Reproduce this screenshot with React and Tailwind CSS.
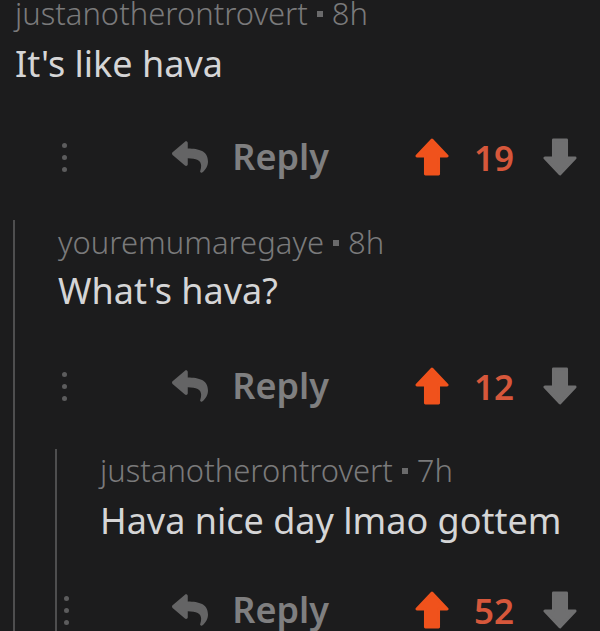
import { FaReply } from 'react-icons/fa'

function VoteArrow({ down = false, className = '' }) {
  return (
    <svg
      viewBox="0 0 36 40"
      className={`h-[38px] w-[34px] ${down ? 'rotate-180' : ''} ${className}`}
    >
      <polygon
        points="18,2 34,19 25,19 25,38 11,38 11,19 2,19"
        fill="currentColor"
        stroke="currentColor"
        strokeWidth="3"
        strokeLinejoin="round"
      />
    </svg>
  )
}

function Dots() {
  return (
    <div className="flex flex-col gap-[7px]">
      <span className="block h-[5px] w-[5px] rounded-full bg-[#5c5c5d]" />
      <span className="block h-[5px] w-[5px] rounded-full bg-[#5c5c5d]" />
      <span className="block h-[5px] w-[5px] rounded-full bg-[#5c5c5d]" />
    </div>
  )
}

function Actions({ score, className = '' }) {
  return (
    <div className={`flex h-[44px] items-center justify-between ${className}`}>
      <Dots />
      <div className="flex items-center">
        <FaReply className="h-[36px] w-[36px] text-[#646465]" />
        <span className="ml-[24px] text-[36px] font-semibold leading-none text-[#7f7f80]">Reply</span>
        <VoteArrow className="ml-[86px] text-[#f0521c]" />
        <span className="ml-[25px] w-[42px] text-[35px] font-semibold leading-none text-[#d6573b]">{score}</span>
        <VoteArrow down className="ml-[27px] text-[#6f6f70]" />
      </div>
    </div>
  )
}

function Meta({ user, age }) {
  return (
    <p className="flex items-baseline text-[31px] font-light leading-[30px] text-[#7a7a7b]">
      <span>{user}</span>
      <span className="mx-[9px] inline-block h-[6px] w-[6px] -translate-y-[8px] bg-[#6a6a6b]" />
      <span>{age}</span>
    </p>
  )
}

function Body({ children, className = '' }) {
  return <p className={`text-[36px] leading-[36px] text-[#d5d5d6] ${className}`}>{children}</p>
}

export default function App() {
  return (
    <div className="h-[631px] overflow-hidden bg-[#1c1c1d] pl-[13px] pr-[23px] font-['Noto_Sans','Open_Sans',sans-serif]">
      <div className="-mt-[2px] pl-[2px]">
        <Meta user="justanotherontrovert" age="8h" />
        <Body className="mt-[18px]">It's like hava</Body>
      </div>
      <Actions score="19" className="mt-[53px] pl-[49px]" />

      <div className="mt-[41px] border-l-2 border-[#4e4e4f] pl-[40px]">
        <div className="pt-[7px] pl-[3px]">
          <Meta user="youremumaregaye" age="8h" />
          <Body className="mt-[16px]">What's hava?</Body>
        </div>
        <Actions score="12" className="mt-[55px] pl-[7px]" />

        <div className="mt-[41px] border-l-2 border-[#4e4e4f] pl-[43px]">
          <div className="pt-[6px]">
            <Meta user="justanotherontrovert" age="7h" />
            <Body className="mt-[18px]">Hava nice day lmao gottem</Body>
          </div>
          <Actions score="52" className="mt-[49px] -ml-[43px] pl-[7px]" />
        </div>
      </div>
    </div>
  )
}
